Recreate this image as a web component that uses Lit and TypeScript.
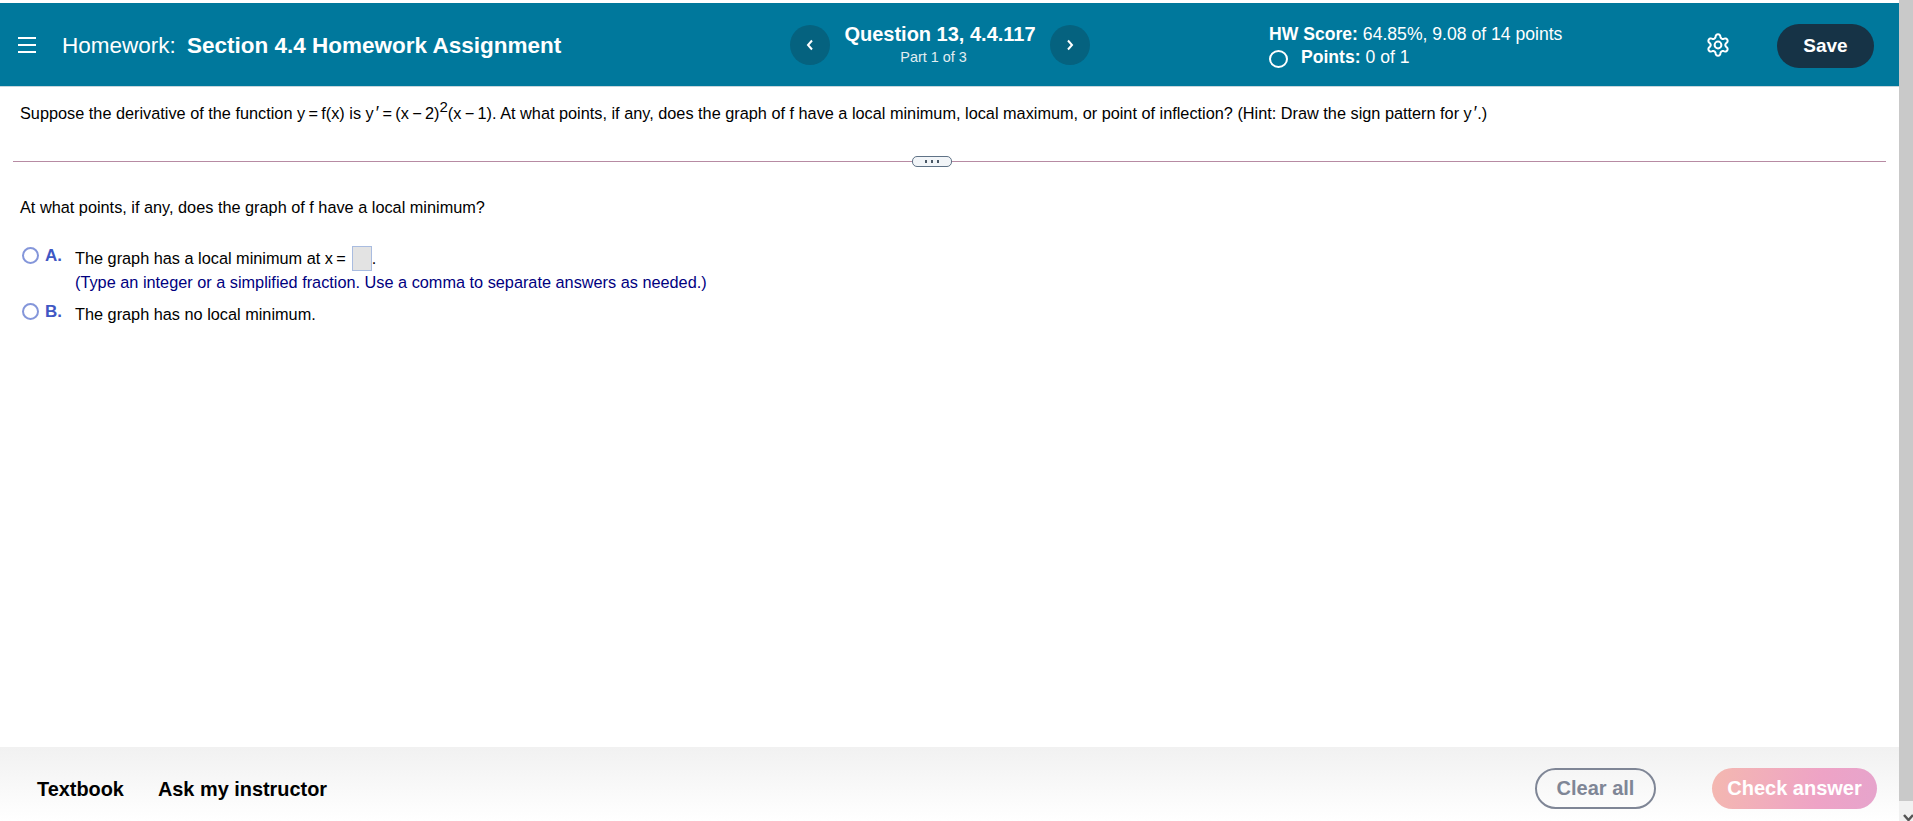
import { LitElement, html, css, svg } from 'lit';
import { customElement } from 'lit/decorators.js';

// Outline of the settings gear: six rounded lobes around the centre of a 24 box.
function gearPath(): string {
  const points: string[] = [];
  for (let i = 0; i < 144; i++) {
    const a = (i / 144) * Math.PI * 2;
    const wave = Math.cos(6 * a);
    const r = 9 + 1.7 * Math.sign(wave) * Math.pow(Math.abs(wave), 0.6);
    const x = 12 + r * Math.sin(a);
    const y = 12 - r * Math.cos(a);
    points.push(`${x.toFixed(2)} ${y.toFixed(2)}`);
  }
  return `M${points.join('L')}Z`;
}

/**
 * Homework player page: top bar, question body and bottom action bar.
 */
@customElement('app-root')
export class AppRoot extends LitElement {
  static override styles = css`
    :host {
      display: flex;
      width: 1913px;
      height: 821px;
      overflow: hidden;
      background: #fff;
      color: #000;
      font-family: 'Liberation Sans', Arial, sans-serif;
    }

    .page {
      flex: 1;
      display: flex;
      flex-direction: column;
      min-width: 0;
      padding-top: 3px;
    }

    /* Top bar */
    .topbar {
      box-sizing: border-box;
      height: 84px;
      flex: none;
      display: flex;
      align-items: center;
      background: #00789c;
      border-bottom: 1px solid #c6d6dc;
      color: #fff;
    }
    .menu {
      margin-left: 18px;
      width: 18px;
      height: 16px;
      flex: none;
      display: flex;
      flex-direction: column;
      justify-content: space-between;
    }
    .menu span {
      height: 2px;
      background: #fff;
    }
    .title {
      margin: 2px 0 0 26px;
      width: 728px;
      flex: none;
      font-size: 22.5px;
      white-space: nowrap;
    }
    .title span {
      margin-right: 5px;
    }
    .nav {
      width: 40px;
      height: 40px;
      flex: none;
      border-radius: 50%;
      background: #05627f;
      display: flex;
      align-items: center;
      justify-content: center;
    }
    .question {
      width: 220px;
      flex: none;
      text-align: center;
      display: flex;
      flex-direction: column;
      gap: 2px;
      margin-top: -1px;
    }
    .question b {
      font-size: 20px;
      line-height: 25px;
    }
    .question span {
      padding-right: 13px;
      font-size: 14.4px;
      line-height: 17px;
      color: #e2eef2;
    }
    .score {
      margin: 3px 0 0 179px;
      width: 438px;
      flex: none;
      font-size: 17.6px;
      line-height: 23px;
      white-space: nowrap;
    }
    .points {
      display: flex;
      align-items: center;
    }
    .ring {
      box-sizing: border-box;
      width: 19px;
      height: 18px;
      border: 2.5px solid #fff;
      border-radius: 50%;
      margin-right: 13px;
      margin-top: 3px;
    }
    .gear {
      flex: none;
      width: 24px;
      height: 24px;
      margin: 0 -1px;
    }
    .save {
      margin: 3px 0 0 48px;
      width: 97px;
      height: 44px;
      flex: none;
      border-radius: 22px;
      background: #163346;
      display: flex;
      align-items: center;
      justify-content: center;
      font-size: 19px;
      font-weight: 700;
    }

    /* Question body */
    .prompt {
      margin: 16px 0 0 20px;
      font-size: 16.3px;
      line-height: 20px;
      white-space: nowrap;
    }
    .math {
      word-spacing: -1.2px;
    }
    .prime {
      font-size: 18px;
      line-height: 0;
      margin-left: 2px;
    }
    sup {
      font-size: 15px;
      line-height: 0;
      vertical-align: 7px;
    }
    .divider {
      margin: 33px 13px 0;
      display: flex;
      align-items: center;
      height: 11px;
    }
    .divider i {
      flex: 1;
      height: 1px;
      background: #b78ba3;
    }
    .divider i:first-child {
      flex: none;
      width: 899px;
    }
    .more {
      width: 40px;
      height: 11px;
      flex: none;
      box-sizing: border-box;
      border: 1px solid #5f7286;
      border-radius: 5px;
      background: #f2f5f8;
      display: flex;
      align-items: center;
      justify-content: center;
      gap: 4px;
    }
    .more u {
      width: 2px;
      height: 3px;
      background: #4a5866;
    }
    .sub {
      margin: 30px 0 0 20px;
      font-size: 16.3px;
      line-height: 20px;
    }
    .choices {
      margin: 27px 0 0 22px;
      display: flex;
      flex-direction: column;
      gap: 6px;
      font-size: 16.3px;
    }
    .choice {
      display: flex;
    }
    .radio {
      box-sizing: border-box;
      width: 17px;
      height: 17px;
      margin-top: 3px;
      flex: none;
      border: 2.5px solid #8496da;
      border-radius: 50%;
      background: #fff;
    }
    .letter {
      width: 30px;
      margin-left: 6px;
      flex: none;
      color: #3f57c4;
      font-size: 17px;
      font-weight: 700;
      line-height: 23px;
    }
    .text {
      padding-top: 2px;
      line-height: 24px;
    }
    .blank {
      display: inline-block;
      box-sizing: border-box;
      width: 20px;
      height: 25px;
      margin: -3px 0 -7px 6px;
      vertical-align: baseline;
      background: #e3e3e3;
      border: 1px solid #a9bce0;
    }
    .hint {
      color: #00007f;
    }

    /* Bottom bar */
    .footer {
      margin-top: auto;
      box-sizing: border-box;
      height: 74px;
      flex: none;
      display: flex;
      align-items: center;
      padding: 8px 22px 0 37px;
      background: linear-gradient(#f1f1f1, #fff);
      font-size: 20px;
      font-weight: 700;
    }
    .link {
      margin: 2px 34px 0 0;
      font-size: 19.9px;
    }
    .clear {
      margin-left: auto;
      box-sizing: border-box;
      width: 121px;
      height: 41px;
      padding-top: 1px;
      border: 2px solid #7f8696;
      border-radius: 21px;
      display: flex;
      align-items: center;
      justify-content: center;
      color: #7f8696;
    }
    .check {
      margin-left: 56px;
      box-sizing: border-box;
      width: 165px;
      height: 41px;
      padding-top: 1px;
      border-radius: 21px;
      background: linear-gradient(100deg, #f4b8b0, #eea3c6 65%, #e6a4cc);
      display: flex;
      align-items: center;
      justify-content: center;
      color: #fff;
    }

    /* Scrollbar */
    .scrollbar {
      width: 14px;
      flex: none;
      display: flex;
      flex-direction: column;
      background: #f1f1f1;
    }
    .thumb {
      height: 801px;
      flex: none;
      background: #c9c9c9;
    }
    .arrow {
      width: 14px;
      height: 20px;
    }
  `;

  override render() {
    return html`
      <div class="page">
        <header class="topbar">
          <div class="menu"><span></span><span></span><span></span></div>
          <div class="title"><span>Homework:</span> <b>Section 4.4 Homework Assignment</b></div>
          <div class="nav">
            <svg width="10" height="12" viewBox="0 0 10 12"><path d="M7 1.5 3 6l4 4.5" fill="none" stroke="#fff" stroke-width="2"/></svg>
          </div>
          <div class="question">
            <b>Question 13, 4.4.117</b>
            <span>Part 1 of 3</span>
          </div>
          <div class="nav">
            <svg width="10" height="12" viewBox="0 0 10 12"><path d="M3 1.5 7 6l-4 4.5" fill="none" stroke="#fff" stroke-width="2"/></svg>
          </div>
          <div class="score">
            <div><b>HW Score:</b> 64.85%, 9.08 of 14 points</div>
            <div class="points"><span class="ring"></span><b>Points:</b>&nbsp;0 of 1</div>
          </div>
          <svg class="gear" viewBox="0 0 24 24" fill="none" stroke="#fff" stroke-width="2" stroke-linejoin="round">
            ${svg`<path d=${gearPath()}></path><circle cx="12" cy="12" r="3.4"></circle>`}
          </svg>
          <div class="save">Save</div>
        </header>

        <div class="prompt">Suppose the derivative of the function <span class="math">y = f(x)</span> is <span class="math">y<span class="prime">&#8242;</span> = (x &#8722; 2)<sup>2</sup>(x &#8722; 1)</span>. At what points, if any, does the graph of f have a local minimum, local maximum, or point of inflection? (Hint: Draw the sign pattern for y<span class="prime">&#8242;</span>.)</div>

        <div class="divider">
          <i></i>
          <div class="more"><u></u><u></u><u></u></div>
          <i></i>
        </div>

        <div class="sub">At what points, if any, does the graph of f have a local minimum?</div>

        <div class="choices">
          <div class="choice">
            <span class="radio"></span>
            <span class="letter">A.</span>
            <div class="text">
              <div>The graph has a local minimum at <span class="math">x =</span><span class="blank"></span>.</div>
              <div class="hint">(Type an integer or a simplified fraction. Use a comma to separate answers as needed.)</div>
            </div>
          </div>
          <div class="choice">
            <span class="radio"></span>
            <span class="letter">B.</span>
            <div class="text">The graph has no local minimum.</div>
          </div>
        </div>

        <footer class="footer">
          <span class="link">Textbook</span>
          <span class="link">Ask my instructor</span>
          <div class="clear">Clear all</div>
          <div class="check">Check answer</div>
        </footer>
      </div>
      <div class="scrollbar">
        <div class="thumb"></div>
        <svg class="arrow" viewBox="0 0 14 20"><path d="M5 14l4.5 5 4.5-5" fill="none" stroke="#555" stroke-width="2.5"/></svg>
      </div>
    `;
  }
}
